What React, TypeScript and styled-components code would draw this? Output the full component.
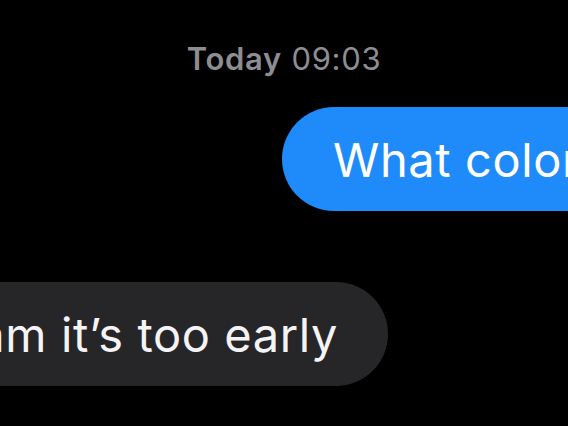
import styled, { createGlobalStyle } from "styled-components";

const Global = createGlobalStyle`
  html, body {
    margin: 0;
    padding: 0;
    background: #000;
  }
  body {
    font-family: Inter, "Noto Sans", sans-serif;
  }
`;

const Screen = styled.main`
  width: 568px;
  height: 426px;
  overflow: hidden;
  background: #000;
  display: flex;
  flex-direction: column;
`;

const Stamp = styled.div`
  margin-top: 41px;
  text-align: center;
  font-size: 31px;
  line-height: 36px;
  color: #8d8d92;
  letter-spacing: 0.7px;

  b {
    font-weight: 600;
  }
`;

const Row = styled.div<{ $side: "in" | "out" }>`
  display: flex;
  justify-content: ${(p) => (p.$side === "out" ? "flex-start" : "flex-end")};
  ${(p) =>
    p.$side === "out"
      ? "padding-left: 282px; margin-top: 30px;"
      : "width: 388px; margin-top: 71px;"}
`;

const Bubble = styled.div<{ $side: "in" | "out" }>`
  flex-shrink: 0;
  white-space: nowrap;
  height: 104px;
  box-sizing: border-box;
  display: flex;
  align-items: center;
  padding: 0 50px 0 51px;
  border-radius: 52px;
  font-size: 47px;
  letter-spacing: 0.6px;
  color: ${(p) => (p.$side === "out" ? "#fff" : "#f4f4f6")};
  background: ${(p) => (p.$side === "out" ? "#1f8bfb" : "#262629")};
`;

export default function App() {
  return (
    <Screen>
      <Global />
      <Stamp>
        <b>Today</b> 09:03
      </Stamp>
      <Row $side="out">
        <Bubble $side="out">What color is it?</Bubble>
      </Row>
      <Row $side="in">
        <Bubble $side="in">Hmm it’s too early</Bubble>
      </Row>
    </Screen>
  );
}
